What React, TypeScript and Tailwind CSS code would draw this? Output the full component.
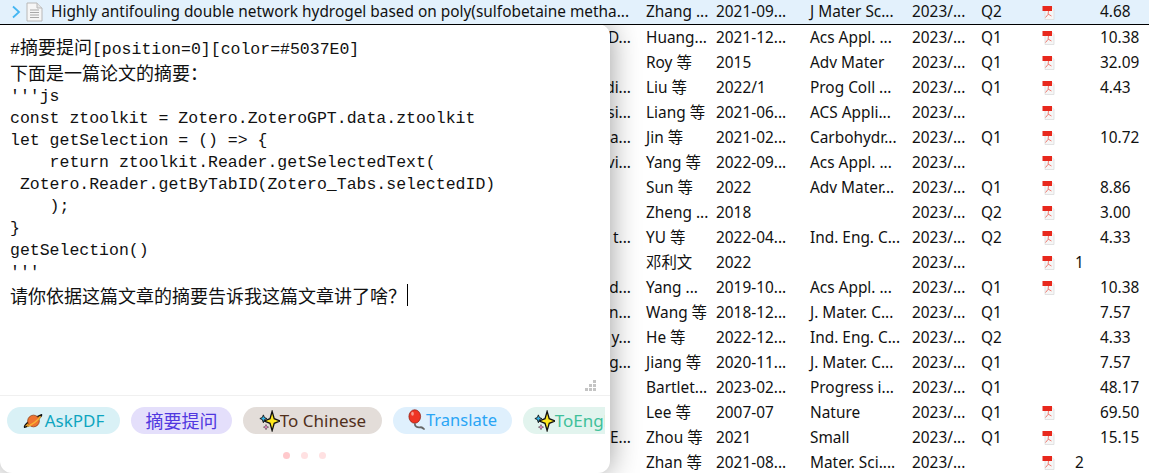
const rows: [string, string, string, string, string, string, boolean, string, string][] = [
  ["", "Zhang ...", "2021-09...", "J Mater Sc...", "2023/...", "Q2", true, "", "4.68"],
  ["D...", "Huang...", "2021-12...", "Acs Appl. ...", "2023/...", "Q1", true, "", "10.38"],
  ["", "Roy 等", "2015", "Adv Mater", "2023/...", "Q1", true, "", "32.09"],
  ["di...", "Liu 等", "2022/1", "Prog Coll ...", "2023/...", "Q1", true, "", "4.43"],
  ["si...", "Liang 等", "2021-06...", "ACS Appli...", "2023/...", "", true, "", ""],
  ["ha...", "Jin 等", "2021-02...", "Carbohydr...", "2023/...", "Q1", true, "", "10.72"],
  ["vi...", "Yang 等", "2022-09...", "Acs Appl. ...", "2023/...", "", true, "", ""],
  ["", "Sun 等", "2022", "Adv Mater...", "2023/...", "Q1", true, "", "8.86"],
  ["", "Zheng ...", "2018", "", "2023/...", "Q2", true, "", "3.00"],
  ["t...", "YU 等", "2022-04...", "Ind. Eng. C...", "2023/...", "Q2", true, "", "4.33"],
  ["", "邓利文", "2022", "", "2023/...", "", true, "1", ""],
  ["d...", "Yang ...", "2019-10...", "Acs Appl. ...", "2023/...", "Q1", true, "", "10.38"],
  ["n...", "Wang 等", "2018-12...", "J. Mater. C...", "2023/...", "Q1", false, "", "7.57"],
  ["y...", "He 等", "2022-12...", "Ind. Eng. C...", "2023/...", "Q2", false, "", "4.33"],
  ["g...", "Jiang 等", "2020-11...", "J. Mater. C...", "2023/...", "Q1", false, "", "7.57"],
  ["", "Bartlet...", "2023-02...", "Progress i...", "2023/...", "Q1", false, "", "48.17"],
  ["", "Lee 等", "2007-07", "Nature", "2023/...", "Q1", true, "", "69.50"],
  ["E...", "Zhou 等", "2021", "Small", "2023/...", "Q1", true, "", "15.15"],
  ["", "Zhan 等", "2021-08...", "Mater. Sci....", "2023/...", "", true, "2", ""],
];

function PdfIcon() {
  return (
    <svg width="13" height="15" viewBox="0 0 13 15">
      <path d="M3 1.500h6l3 3v10H3z" fill="#f6f6f6" stroke="#dcdcdc" strokeWidth="0.8" />
      <rect x="0.500" y="1" width="9.500" height="5" fill="#e8281c" />
      <path d="M6.500 6l-.5 3.500L3.500 12.500M6 9l3.500 2" fill="none" stroke="#f07a70" strokeWidth="1" />
    </svg>
  );
}

function PlanetIcon() {
  return (
    <svg width="21" height="18" viewBox="0 0 22 20">
      <path d="M1 17c-1-2 6-9 19-14 1 1-7 11-19 14z" fill="#f5a623" stroke="#111" strokeWidth="1.400" />
      <circle cx="11" cy="10" r="6.500" fill="#ee7330" stroke="#8a3b10" strokeWidth="0.800" />
      <path d="M4 16c6-2 11-6 15-11" fill="none" stroke="#f9b233" strokeWidth="1.500" />
    </svg>
  );
}

function SparkleIcon() {
  return (
    <svg width="21" height="22" viewBox="0 0 24 24">
      <path d="M15 1l2.400 8.400L24 12l-6.600 2.600L15 23l-2.400-8.400L6 12l6.600-2.600z" fill="#ffe81c" stroke="#111" strokeWidth="1.500" />
      <path d="M5 5l1.200 3L9 9.200 6.200 10.400 5 14l-1.200-3.600L1 9.200l2.800-1.200z" fill="#32b4e8" stroke="#111" strokeWidth="1" />
      <path d="M8 16l.9 2.100L11 19l-2.100.9L8 22l-.9-2.100L5 19l2.100-.9z" fill="#e884c0" stroke="#555" strokeWidth="0.700" />
    </svg>
  );
}

function BalloonIcon() {
  return (
    <svg width="18" height="24" viewBox="0 0 20 26">
      <ellipse cx="7.500" cy="8" rx="6.500" ry="7.500" fill="#ee3524" stroke="#8c2014" strokeWidth="0.800" />
      <ellipse cx="5" cy="5" rx="1.500" ry="2.200" fill="#f89a8c" />
      <path d="M7.500 15.500c0 4 3 5 6 4.500s3 2 5 2" fill="none" stroke="#666" strokeWidth="2" />
    </svg>
  );
}

const chips = [
  { label: "AskPDF", icon: <PlanetIcon />, cls: "w-[113px] bg-[#d9f1f6] text-[#0ea5c0] text-[17px] gap-px" },
  { label: "摘要提问", icon: null, cls: "w-[101px] bg-[#e4dffb] text-[#5037e0] text-[18px]" },
  { label: "To Chinese", icon: <SparkleIcon />, cls: "w-[139px] bg-[#e3ddd9] text-[#51301c] text-[17px]" },
  { label: "Translate", icon: <BalloonIcon />, cls: "w-[119px] bg-[#dff0fd] text-[#2aa5f5] text-[16.5px]" },
  { label: "ToEnglish", icon: <SparkleIcon />, cls: "w-[119px] bg-[#e2f4ee] text-[#3fc09a] text-[17px]" },
];

const cjk = "text-[18px] [font-family:'Noto_Sans_CJK_SC',sans-serif]";

export default function App() {
  return (
    <div className="relative h-[473px] w-[1149px] overflow-hidden bg-white text-[15.4px] text-[#111] [font-family:'Noto_Sans','Noto_Sans_CJK_SC',sans-serif]">
      {/* Item list */}
      <div className="flex flex-col">
        {rows.map((r, i) => (
          <div
            key={i}
            className={
              "grid h-[25px] grid-cols-[646px_70px_94px_102px_69px_61px_33px_25px_49px] items-center whitespace-nowrap leading-[22px] " +
              (i === 0 ? "relative z-10 h-[24px] border-b border-black bg-[#e3f1fc]" : "")
            }
          >
            {i === 0 ? (
              <div className="flex items-center overflow-hidden">
                <svg className="ml-[11px] shrink-0" width="10" height="14" viewBox="0 0 10 14">
                  <path d="M2 1.500L8 7l-6 5.500" fill="none" stroke="#45b6f2" strokeWidth="1.800" />
                </svg>
                <svg className="ml-[5px] shrink-0" width="17" height="20" viewBox="0 0 17 20">
                  <path d="M1 1h10l5 5v13H1z" fill="#f6f6f6" stroke="#b8b8b8" />
                  <path d="M11 1v5h5" fill="#e4e4e4" stroke="#b8b8b8" />
                  <path d="M4 8h9M4 10.500h9M4 13h9M4 15.500h9" stroke="#a8a8a8" />
                </svg>
                <span className="ml-[8px]">Highly antifouling double network hydrogel based on poly(sulfobetaine metha...</span>
              </div>
            ) : (
              <div className="pr-[15px] text-right">{r[0]}</div>
            )}
            <div>{r[1]}</div>
            <div>{r[2]}</div>
            <div>{r[3]}</div>
            <div>{r[4]}</div>
            <div>{r[5]}</div>
            <div className="flex">{r[6] && <PdfIcon />}</div>
            <div>{r[7]}</div>
            <div>{r[8]}</div>
          </div>
        ))}
      </div>

      {/* GPT prompt panel */}
      <div className="absolute left-0 top-[24px] flex h-[449px] w-[610px] flex-col rounded-r-[12px] rounded-b-[12px] bg-white shadow-[0_0_30px_rgba(0,0,0,0.4)]">
        <div className="relative h-[371px] shrink-0 whitespace-pre px-[10px] pt-[11px] text-[16.5px] leading-[22px] text-[#111] [font-family:'Liberation_Mono','Noto_Sans_CJK_SC',monospace]">
          <div className="h-[26px]">#<span className={cjk}>摘要提问</span>[position=0][color=#5037E0]</div>
          <div className={"h-[25px] " + cjk}>下面是一篇论文的摘要：</div>
          <div>{"'''js"}</div>
          <div>const ztoolkit = Zotero.ZoteroGPT.data.ztoolkit</div>
          <div>{"let getSelection = () => {"}</div>
          <div>{"    return ztoolkit.Reader.getSelectedText("}</div>
          <div>{" Zotero.Reader.getByTabID(Zotero_Tabs.selectedID)"}</div>
          <div>{"    );"}</div>
          <div>{"}"}</div>
          <div>getSelection()</div>
          <div>{"'''"}</div>
          <div className={"flex h-[22px] items-center " + cjk}>
            请你依据这篇文章的摘要告诉我这篇文章讲了啥？
            <span className="ml-[1px] h-[22px] w-px bg-black" />
          </div>
          {/* resize grip */}
          <div className="absolute bottom-[4px] right-[14px] grid grid-cols-3 gap-px">
            <span className="size-[3px]" /><span className="size-[3px]" /><span className="size-[3px] bg-[#c4c4c4]" />
            <span className="size-[3px]" /><span className="size-[3px] bg-[#c4c4c4]" /><span className="size-[3px] bg-[#c4c4c4]" />
            <span className="size-[3px] bg-[#c4c4c4]" /><span className="size-[3px] bg-[#c4c4c4]" /><span className="size-[3px] bg-[#c4c4c4]" />
          </div>
        </div>

        <div className="border-t border-[#f0f0f0] pt-[11px]">
          <div className="ml-[7px] flex w-[598px] gap-[11px] overflow-hidden">
            {chips.map((c) => (
              <div
                key={c.label}
                className={"flex h-[27px] shrink-0 items-center justify-center rounded-[14px] leading-none " + c.cls}
              >
                {c.icon}
                <span>{c.label}</span>
              </div>
            ))}
          </div>
          <div className="mt-[18px] flex justify-center gap-[11px] pr-[1px]">
            <span className="size-[7px] rounded-full bg-[#ffc9cc]" />
            <span className="size-[7px] rounded-full bg-[#ffe1e2]" />
            <span className="size-[7px] rounded-full bg-[#ffe1e2]" />
          </div>
        </div>
      </div>
    </div>
  );
}
